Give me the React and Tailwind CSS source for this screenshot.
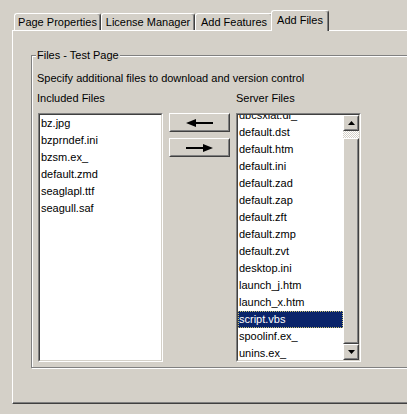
const included = ['bz.jpg', 'bzprndef.ini', 'bzsm.ex_', 'default.zmd', 'seaglapl.ttf', 'seagull.saf'];

const server = [
  'dbcsxlat.dl_',
  'default.dst',
  'default.htm',
  'default.ini',
  'default.zad',
  'default.zap',
  'default.zft',
  'default.zmp',
  'default.zvt',
  'desktop.ini',
  'launch_j.htm',
  'launch_x.htm',
  'script.vbs',
  'spoolinf.ex_',
  'unins.ex_',
];

function Tab({ label, className, active }) {
  if (active) {
    return (
      <div
        className={`relative z-10 -mb-px -ml-[2px] flex h-[21px] justify-center rounded-t-[3px] border-t border-r border-l border-t-white border-r-[#404040] border-l-white bg-[#d4d0c8] pt-[3px] leading-[13px] shadow-[inset_-1px_0_0_#808080] ${className}`}
      >
        {label}
      </div>
    );
  }
  return (
    <div
      className={`flex h-[17px] justify-center rounded-t-[3px] border-t border-r border-l border-t-white border-r-[#404040] border-l-white pt-[2px] leading-[13px] shadow-[inset_-1px_0_0_#808080] ${className}`}
    >
      {label}
    </div>
  );
}

function Raised({ className, children }) {
  return (
    <div className={`border border-t-white border-r-[#404040] border-b-[#404040] border-l-white ${className}`}>
      <div className="flex h-full w-full items-center justify-center border border-t-[#d4d0c8] border-r-[#808080] border-b-[#808080] border-l-[#d4d0c8] bg-[#d4d0c8]">
        {children}
      </div>
    </div>
  );
}

function Sunken({ className, children }) {
  return (
    <div className={`border border-t-[#808080] border-r-white border-b-white border-l-[#808080] ${className}`}>
      <div className="flex h-full w-full overflow-hidden border border-t-[#404040] border-r-[#d4d0c8] border-b-[#d4d0c8] border-l-[#404040] bg-white">
        {children}
      </div>
    </div>
  );
}

function Arrow({ dir }) {
  return (
    <svg width="27" height="8" viewBox="0 0 27 8" className={dir === 'right' ? 'rotate-180' : ''}>
      <polygon points="0,4 10,0 10,8" fill="#000" />
      <rect x="9" y="3" width="18" height="2" fill="#000" />
    </svg>
  );
}

function Tri({ down }) {
  return (
    <svg width="7" height="4" viewBox="0 0 7 4">
      <polygon points={down ? '0,0 7,0 3.5,4' : '3.5,0 7,4 0,4'} fill="#000" />
    </svg>
  );
}

export default function App() {
  return (
    <div className="h-[414px] w-[407px] overflow-hidden bg-[#d4d0c8] font-['Liberation_Sans',Arial,sans-serif] text-[11px] text-black">
      {/* tab strip */}
      <div className="flex items-end pt-[10px] pl-[14px]">
        <Tab label="Page Properties" className="w-[87px]" />
        <Tab label="License Manager" className="w-[94px]" />
        <Tab label="Add Features" className="w-[78px]" />
        <Tab label="Add Files" className="w-[58px]" active />
      </div>

      <div className="ml-[12px] h-[374px] w-[420px] border-t border-b border-l border-t-white border-b-[#404040] border-l-white pt-[24px] pl-[18px] shadow-[inset_0_-1px_0_#808080]">
        <div className="h-[313px] w-[400px] border border-[#808080] shadow-[inset_1px_1px_0_#fff,1px_1px_0_#fff]">
          <div className="-mt-[7px] ml-[4px] w-fit bg-[#d4d0c8] px-px leading-[13px]">Files - Test Page</div>
          <div className="mt-[10px] pl-[5px] leading-[13px]">Specify additional files to download and version control</div>
          <div className="mt-[7px] flex pl-[5px] leading-[13px]">
            <div className="w-[199px]">Included Files</div>
            <div>Server Files</div>
          </div>

          <div className="mt-[8px] flex gap-[6px] pl-[6px]">
            <Sunken className="h-[249px] w-[125px]">
              <div className="flex-1">
                {included.map((f) => (
                  <div key={f} className="h-[17px] pl-px leading-[17px]">
                    {f}
                  </div>
                ))}
              </div>
            </Sunken>

            <div className="flex w-[61px] flex-col gap-[6px]">
              <Raised className="h-[19px]">
                <Arrow dir="left" />
              </Raised>
              <Raised className="h-[19px]">
                <Arrow dir="right" />
              </Raised>
            </div>

            <Sunken className="h-[249px] w-[125px]">
              <div className="min-w-0 flex-1 overflow-hidden">
                <div className="-mt-[8px]">
                  {server.map((f) =>
                    f === 'script.vbs' ? (
                      <div
                        key={f}
                        className="h-[17px] bg-[#0a246a] pl-px leading-[17px] text-white outline-1 -outline-offset-1 outline-[#c8c070] outline-dotted"
                      >
                        {f}
                      </div>
                    ) : (
                      <div key={f} className="h-[17px] pl-px leading-[17px]">
                        {f}
                      </div>
                    )
                  )}
                </div>
              </div>
              <div className="flex w-[16px] shrink-0 flex-col">
                <Raised className="h-[16px] shrink-0">
                  <Tri />
                </Raised>
                <div className="h-[7px] shrink-0 bg-[image:repeating-conic-gradient(#fff_0_25%,#d4d0c8_0_50%)] bg-[length:2px_2px]" />
                <Raised className="min-h-0 flex-1" />
                <Raised className="h-[16px] shrink-0">
                  <Tri down />
                </Raised>
              </div>
            </Sunken>
          </div>
        </div>
      </div>
    </div>
  );
}
